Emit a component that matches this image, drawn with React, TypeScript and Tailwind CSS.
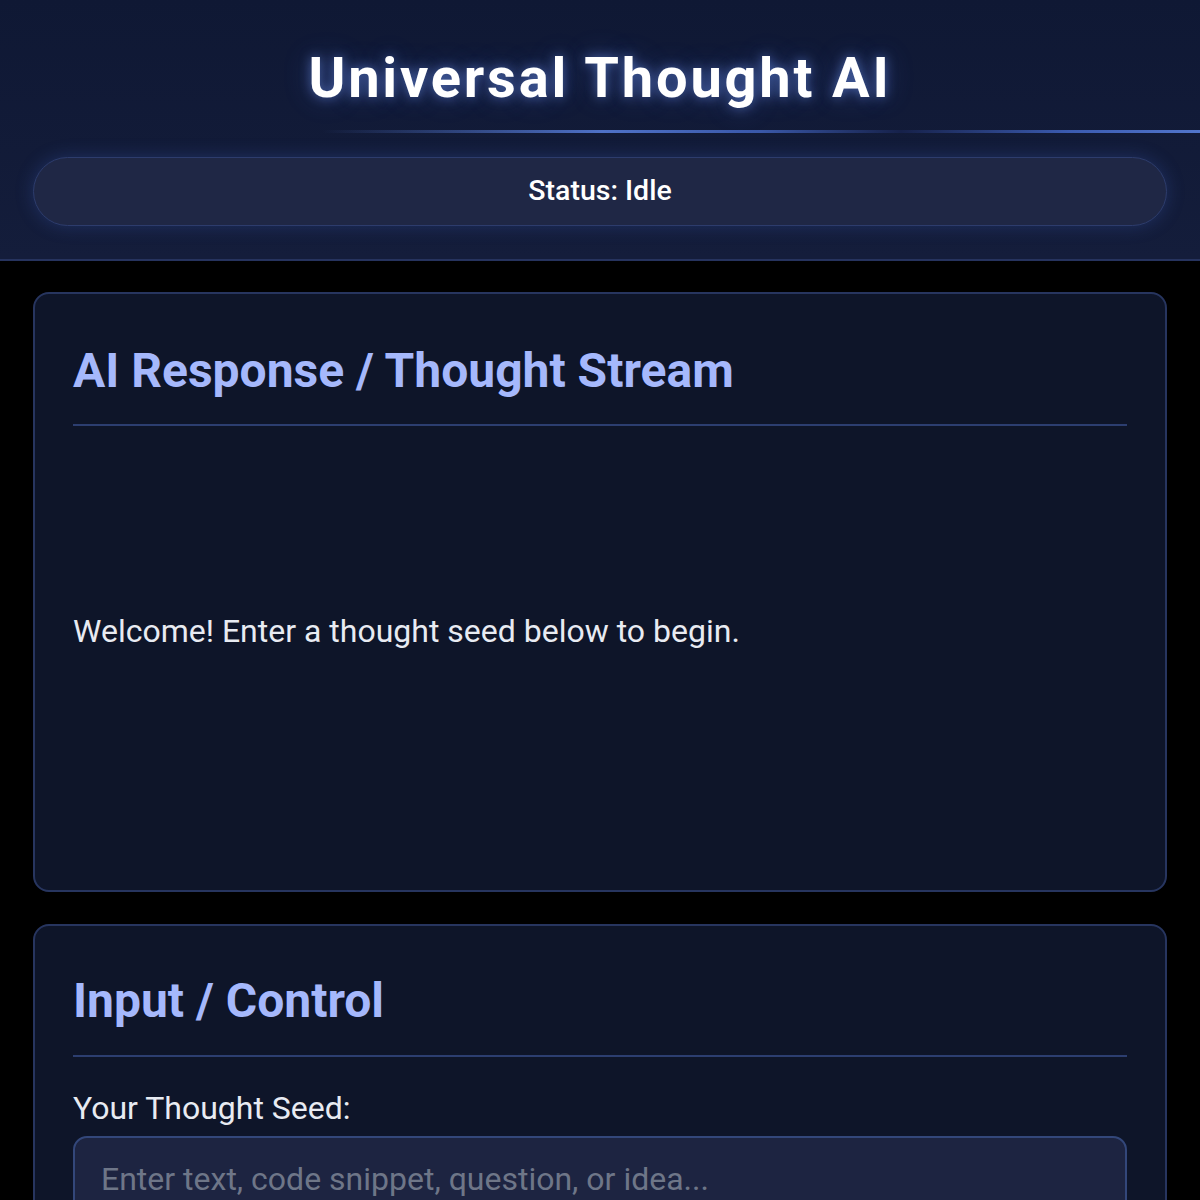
export default function App() {
  return (
    <div className="min-h-[1200px] bg-black font-['Roboto',sans-serif] text-white">
      <header className="bg-gradient-to-b from-[#0f1834] to-[#141d3b] border-b-2 border-[#26335e] pb-[33px]">
        <h1 className="pt-[42px] text-center text-[56px] leading-[72px] font-bold tracking-[2.8px] text-white [text-shadow:0_0_12px_rgba(120,160,255,0.55),0_0_28px_rgba(90,130,255,0.3)]">
          Universal Thought AI
        </h1>
        <div className="mt-[16px] ml-[322px] h-[3px] bg-[linear-gradient(90deg,transparent_0%,#4f72c8_32%,#3a58a8_50%,#16214a_66%,#3b5bb0_85%,#5276cc_100%)]" />
        <div className="mx-[33px] mt-[24px] h-[69px] rounded-full border border-[#2d3c6c] bg-[#1f2745] flex items-center justify-center shadow-[0_0_18px_rgba(70,110,220,0.25)]">
          <span className="text-[28.5px] font-medium text-white">Status: Idle</span>
        </div>
      </header>

      <main className="px-[33px] pt-[31px] flex flex-col gap-[32px]">
        <section className="rounded-[16px] border-2 border-[#27355f] bg-[#0e1529] px-[38px] pt-[41px] pb-[54px]">
          <h2 className="text-[48px] leading-[72px] font-bold text-[#a5b8fc] border-b-2 border-[#2c3e70] pb-[17px]">
            AI Response / Thought Stream
          </h2>
          <div className="h-[410px] flex items-center">
            <p className="text-[32px] leading-[45px] text-[#e8ebf2]">
              Welcome! Enter a thought seed below to begin.
            </p>
          </div>
        </section>

        <section className="rounded-[16px] border-2 border-[#27355f] bg-[#0e1529] px-[38px] pt-[39px] pb-[40px]">
          <h2 className="text-[48px] leading-[72px] font-bold text-[#a5b8fc] border-b-2 border-[#2c3e70] pb-[18px]">
            Input / Control
          </h2>
          <label className="block mt-[29px] text-[32px] leading-[45px] text-[#e8ebf2]">
            Your Thought Seed:
          </label>
          <textarea
            rows={4}
            placeholder="Enter text, code snippet, question, or idea..."
            className="mt-[5px] block w-full rounded-[14px] border-2 border-[#33477a] bg-[#1d2441] px-[26px] py-[19px] text-[32px] leading-[45px] text-white placeholder:text-[#6e7688] outline-none resize-none"
          />
        </section>
      </main>
    </div>
  );
}
